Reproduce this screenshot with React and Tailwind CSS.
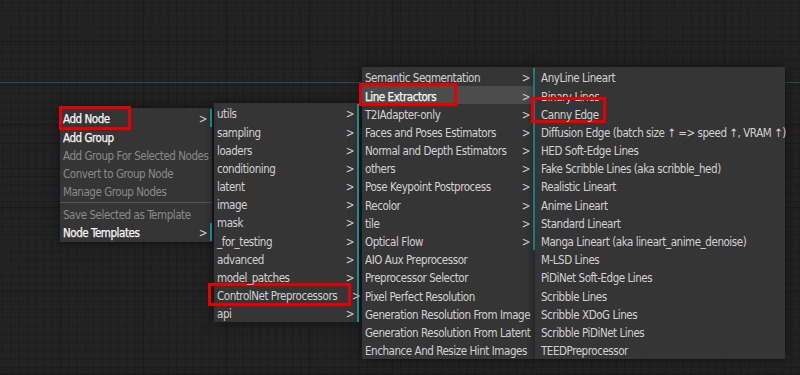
const menuAdd = [
  { label: 'Add Node', sub: true, strong: true, mark: 'w-[66px] -ml-px pl-px h-[18px]' },
  { label: 'Add Group', strong: true },
  { label: 'Add Group For Selected Nodes', disabled: true },
  { label: 'Convert to Group Node', disabled: true },
  { label: 'Manage Group Nodes', disabled: true },
  { separator: true },
  { label: 'Save Selected as Template', disabled: true },
  { label: 'Node Templates', sub: true, strong: true },
];

const menuCategories = [
  'utils', 'sampling', 'loaders', 'conditioning', 'latent', 'image', 'mask',
  '_for_testing', 'advanced', 'model_patches', 'ControlNet Preprocessors', 'api',
].map((label) => ({
  label,
  sub: true,
  mark: label === 'ControlNet Preprocessors' ? 'w-[137px] -ml-[6px] pl-[6px] h-[17px]' : null,
}));

const menuPreprocessors = [
  { label: 'Semantic Segmentation', sub: true },
  {
    label: 'Line Extractors',
    sub: true,
    active: true,
    mark: 'w-[92px] -ml-[3px] pl-[3px] h-[17px] relative -top-px pt-[2px]',
  },
  { label: 'T2IAdapter-only', sub: true },
  { label: 'Faces and Poses Estimators', sub: true },
  { label: 'Normal and Depth Estimators', sub: true },
  { label: 'others', sub: true },
  { label: 'Pose Keypoint Postprocess', sub: true },
  { label: 'Recolor', sub: true },
  { label: 'tile', sub: true },
  { label: 'Optical Flow', sub: true },
  { label: 'AIO Aux Preprocessor' },
  { label: 'Preprocessor Selector' },
  { label: 'Pixel Perfect Resolution' },
  { label: 'Generation Resolution From Image' },
  { label: 'Generation Resolution From Latent' },
  { label: 'Enchance And Resize Hint Images' },
];

const menuLines = [
  'AnyLine Lineart',
  'Binary Lines',
  'Canny Edge',
  'Diffusion Edge (batch size ↑ => speed ↑, VRAM ↑)',
  'HED Soft-Edge Lines',
  'Fake Scribble Lines (aka scribble_hed)',
  'Realistic Lineart',
  'Anime Lineart',
  'Standard Lineart',
  'Manga Lineart (aka lineart_anime_denoise)',
  'M-LSD Lines',
  'PiDiNet Soft-Edge Lines',
  'Scribble Lines',
  'Scribble XDoG Lines',
  'Scribble PiDiNet Lines',
  'TEEDPreprocessor',
].map((label) => ({
  label,
  mark: label === 'Canny Edge' ? 'w-[69px] -ml-[7px] pl-[7px] h-[20px] relative -top-[3px] pt-[6px]' : null,
}));

function MenuItem({ item, padLeft }) {
  if (item.separator) {
    return (
      <div className="h-[5px] flex items-center">
        <div className="h-px w-full bg-[#555555]" />
      </div>
    );
  }
  let color = 'text-[#d2d2d2]';
  if (item.disabled) color = 'text-[#8a8a8a]';
  if (item.strong || item.active) color = 'text-[#f7f7f7] [-webkit-text-stroke:0.25px_#f7f7f7]';

  const text = <span className={`relative top-[2px] ${color}`}>{item.label}</span>;

  return (
    <div
      className={`h-[18.2px] flex items-center justify-between whitespace-nowrap ${padLeft} ${
        item.active ? 'bg-[#4c4c4c]' : ''
      } ${item.sub ? 'border-r-2 border-[#1ba3a3] pr-[3px]' : 'pr-1'}`}
    >
      {item.mark ? (
        // red annotation box drawn around the label
        <span className={`flex items-center shrink-0 outline-[3px] outline-solid outline-[#e80000] ${item.mark}`}>
          {text}
        </span>
      ) : (
        text
      )}
      {item.sub && <span className="relative top-[2px] text-[#cfcfcf] pl-1">&gt;</span>}
    </div>
  );
}

function Menu({ items, className, padLeft = 'pl-[3px]' }) {
  return (
    <div
      className={`absolute flex flex-col bg-[#353535] shadow-[0_0_10px_rgba(0,0,0,0.55)] text-[11.5px] tracking-[-0.45px] leading-none ${className}`}
    >
      {items.map((item, i) => (
        <MenuItem key={i} item={item} padLeft={padLeft} />
      ))}
    </div>
  );
}

export default function App() {
  return (
    <div
      className="relative w-[800px] h-[375px] overflow-hidden bg-[#222222] bg-[linear-gradient(to_right,#191919_1px,transparent_1px),linear-gradient(to_bottom,#191919_1px,transparent_1px),linear-gradient(to_right,#1c1c1c_1px,transparent_1px),linear-gradient(to_bottom,#1c1c1c_1px,transparent_1px)] bg-[size:83px_83px,83px_83px,8.3px_8.3px,8.3px_8.3px] bg-[position:60px_0,0_41px,2px_0,0_2px]"
      style={{ fontFamily: '"DejaVu Sans Condensed", "DejaVu Sans", sans-serif' }}
    >
      {/* link line across the canvas */}
      <div className="absolute left-0 right-0 top-[82px] h-px bg-[#2b4565]" />

      {/* cascading context menus */}
      <Menu items={menuAdd} className="left-[60px] top-[108px] w-[152px] py-px" />
      <Menu items={menuCategories} className="left-[214px] top-[103px] w-[145px] pt-px" />
      <Menu items={menuPreprocessors} className="left-[362px] top-[67px] w-[173px] pt-px" />
      <Menu items={menuLines} className="left-[535px] top-[67px] w-[250px] pt-px" padLeft="pl-[6px]" />
    </div>
  );
}
